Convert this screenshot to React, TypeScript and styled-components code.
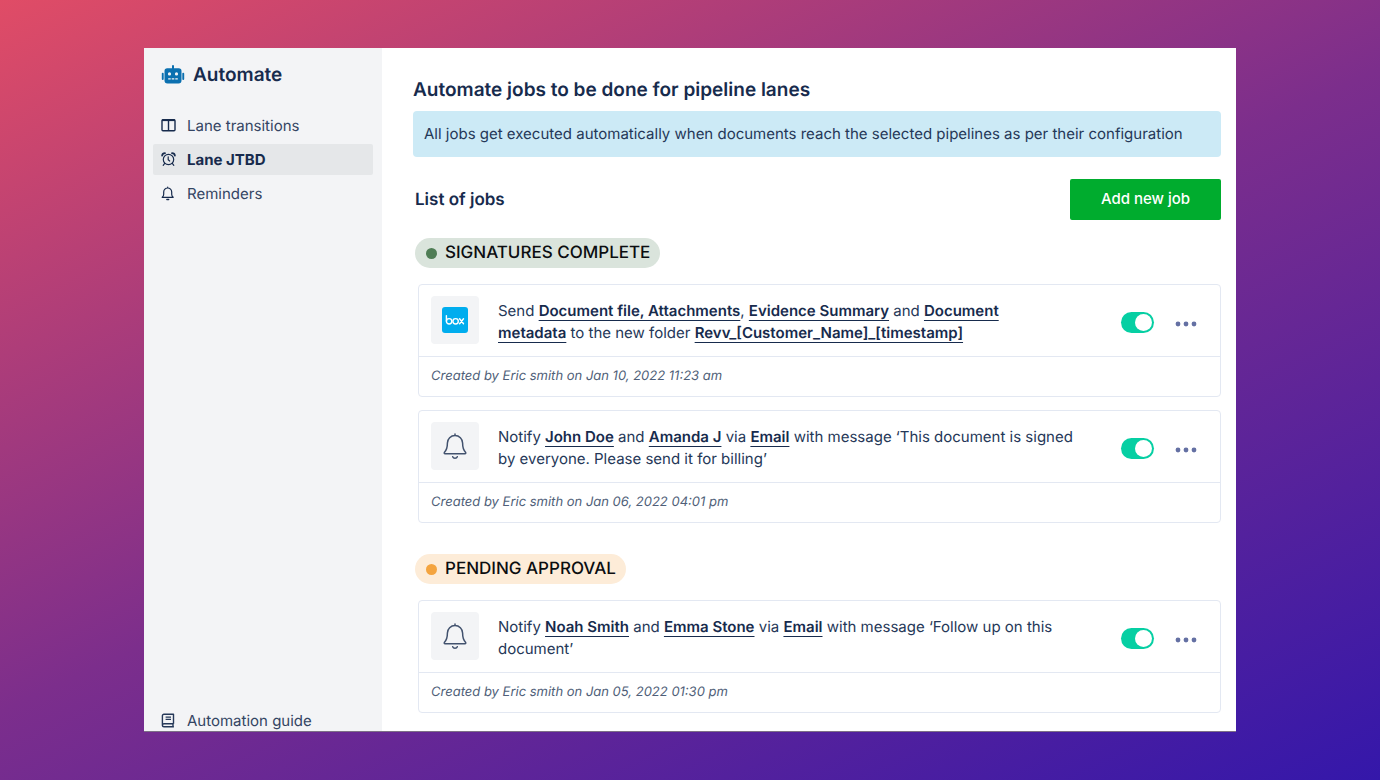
import React from "react";
import styled, { createGlobalStyle } from "styled-components";

const GlobalStyle = createGlobalStyle`
  *, *::before, *::after { box-sizing: border-box; }
  body {
    margin: 0;
    color: #253858;
    font-family: Inter, "Liberation Sans", sans-serif;
    font-size: 15px;
    line-height: 22px;
    text-rendering: geometricPrecision;
  }
`;

const Page = styled.div`
  min-height: 100vh;
  padding: 48px 144px;
  background: linear-gradient(155deg, #e04c66 0%, #7c2e8c 50%, #3417aa 100%);
  display: flex;
`;

const Window = styled.div`
  flex: 1;
  display: flex;
  background: #fff;
  border-bottom: 1px solid #7d6f86;
`;

const Sidebar = styled.aside`
  flex: 0 0 238px;
  display: flex;
  flex-direction: column;
  padding: 14px 9px 0;
  background: #f3f4f6;
`;

const Brand = styled.div`
  display: flex;
  align-items: center;
  gap: 8px;
  padding: 0 8px;
  margin-bottom: 22px;
  color: #172b4d;
  font-size: 19px;
  font-weight: 600;
  line-height: 26px;
`;

const Nav = styled.nav`
  display: flex;
  flex-direction: column;
  gap: 3px;
`;

const NavLink = styled.a<{ $active?: boolean }>`
  display: flex;
  align-items: center;
  gap: 11px;
  height: 31px;
  padding: 0 8px;
  border-radius: 2px;
  background: ${(p) => (p.$active ? "#e5e7e9" : "transparent")};
  color: ${(p) => (p.$active ? "#172b4d" : "#344563")};
  font-weight: ${(p) => (p.$active ? 700 : 400)};
  text-decoration: none;
`;

const Guide = styled.div`
  margin-top: auto;
  height: 26px;
`;

const Main = styled.main`
  flex: 1;
  padding: 28px 15px 18px 31px;
`;

const Title = styled.h1`
  margin: 0 0 7px;
  color: #172b4d;
  font-size: 19px;
  font-weight: 600;
  line-height: 28px;
`;

const Notice = styled.p`
  margin: 0 0 22px;
  padding: 12px 11px;
  border-radius: 4px;
  background: #cceaf6;
`;

const ListHeader = styled.div`
  display: flex;
  align-items: center;
  justify-content: space-between;
  padding-left: 2px;
  margin-bottom: 18px;
`;

const ListTitle = styled.h2`
  margin: 0;
  color: #172b4d;
  font-size: 17px;
  font-weight: 600;
  line-height: 24px;
`;

const AddButton = styled.button`
  width: 151px;
  height: 41px;
  padding: 0 0 2px;
  border: 0;
  border-radius: 2px;
  background: #00ac2e;
  color: #fff;
  font: inherit;
  font-weight: 500;
`;

const Lane = styled.section`
  display: flex;
  flex-direction: column;
  align-items: flex-start;
  padding-left: 2px;
  & + & { margin-top: 31px; }
`;

const LaneTag = styled.h3<{ $bg: string; $dot: string }>`
  display: flex;
  align-items: center;
  gap: 8px;
  margin: 0 0 16px;
  padding: 0 10px 0 11px;
  border-radius: 16px;
  background: ${(p) => p.$bg};
  color: #0b0d10;
  font-size: 17px;
  font-weight: 500;
  line-height: 30px;
  &::before {
    content: "";
    width: 11px;
    height: 11px;
    border-radius: 50%;
    background: ${(p) => p.$dot};
  }
`;

const Jobs = styled.div`
  align-self: stretch;
  display: flex;
  flex-direction: column;
  gap: 13px;
  padding-left: 3px;
`;

const Card = styled.article`
  border: 1px solid #e3e8f2;
  border-radius: 4px;
`;

const CardBody = styled.div`
  display: flex;
  align-items: center;
  height: 72px;
  padding: 3px 23px 0 12px;
  border-bottom: 1px solid #e3e8f2;
`;

const Tile = styled.div`
  flex: 0 0 48px;
  align-self: flex-start;
  height: 48px;
  display: grid;
  place-items: center;
  margin: 8px 19px 0 0;
  border-radius: 4px;
  background: #f3f4f6;
`;

const Description = styled.p`
  flex: 0 1 580px;
  margin: 0 auto 0 0;
`;

const Field = styled.a`
  color: #172b4d;
  font-weight: 600;
  text-decoration: underline;
  text-decoration-thickness: 1px;
  text-underline-offset: 4px;
`;

const Meta = styled.p`
  margin: 0;
  padding: 0 12px;
  color: #505f79;
  font-size: 13px;
  font-style: italic;
  line-height: 39px;
`;

const Switch = styled.input`
  appearance: none;
  width: 33px;
  height: 21px;
  margin: 0 21px 0 0;
  border-radius: 11px;
  background: #06cfa3;
  &::before {
    content: "";
    display: block;
    width: 17px;
    height: 17px;
    margin: 2px;
    border-radius: 50%;
    background: #fff;
  }
  &:checked::before { margin-left: 14px; }
`;

const MoreButton = styled.button`
  display: flex;
  padding: 4px 0 0;
  border: 0;
  background: none;
  color: #6470a3;
`;

const RobotIcon = () => (
  <svg width="24" height="20" viewBox="0 0 24 20" fill="#0b70b0" aria-hidden="true">
    <path
      fillRule="evenodd"
      d="M12 0a1 1 0 0 1 1 1v2.200h4.700a2.800 2.800 0 0 1 2.800 2.800v9.500a3 3 0 0 1-3 3h-11a3 3 0 0 1-3-3V6a2.800 2.800 0 0 1 2.800-2.800H11V1a1 1 0 0 1 1-1zM8.500 7.300a1.600 1.600 0 1 0 0 3.200 1.600 1.600 0 0 0 0-3.200zm7 0a1.600 1.600 0 1 0 0 3.200 1.600 1.600 0 0 0 0-3.200zM7.200 13.200v1.400h2.500v-1.400zm3.500 0v1.400h2.600v-1.400zm3.600 0v1.400h2.500v-1.400z"
    />
    <rect x="0.800" y="7.800" width="1.900" height="7.200" rx="0.900" />
    <rect x="21.300" y="7.800" width="1.900" height="7.200" rx="0.900" />
  </svg>
);

const ColumnsIcon = () => (
  <svg width="15" height="15" viewBox="0 0 15 15" fill="none" stroke="#172b4d" aria-hidden="true">
    <rect x="1" y="1.800" width="13" height="11" rx="1" strokeWidth="1.400" />
    <path d="M1 2.200h13" strokeWidth="1.800" />
    <path d="M7.500 2v11" strokeWidth="1.400" />
  </svg>
);

const AlarmIcon = () => (
  <svg width="15" height="15" viewBox="0 0 15 15" fill="none" stroke="#172b4d" strokeWidth="1.200" strokeLinecap="round" strokeLinejoin="round" aria-hidden="true">
    <circle cx="7.500" cy="7.500" r="5.200" />
    <path d="M7.200 4.800v3l1.500 1.200M3.700 11.400l-1.500 1.900M11.300 11.400l1.500 1.900" />
    <path d="M1.100 3.700C1.300 2.100 2.500 1.200 4 1.200M13.900 3.700C13.700 2.100 12.500 1.200 11 1.200" strokeWidth="1.700" />
  </svg>
);

const SmallBellIcon = () => (
  <svg width="15" height="15" viewBox="0 0 15 15" fill="none" stroke="#172b4d" strokeWidth="1.200" strokeLinecap="round" strokeLinejoin="round" aria-hidden="true">
    <path d="M6.700 1v1M1.200 11.300h11c-.9-.7-1.500-1.700-1.500-3V6a4 4 0 0 0-8 0v2.300c0 1.300-.5 2.300-1.500 3z" />
    <path d="M5.900 13.500h1.700" strokeWidth="1.500" />
  </svg>
);

const BookIcon = () => (
  <svg width="15" height="15" viewBox="0 0 15 15" fill="none" stroke="#253858" strokeWidth="1.400" strokeLinejoin="round" aria-hidden="true">
    <path d="M12.500 10.700V1.200H2.900A1.500 1.500 0 0 0 1.400 2.700v9.600a1.500 1.500 0 0 0 1.500 1.500h10M12.500 10.700H2.900a1.500 1.500 0 0 0 0 3M12 10.700v3M4.600 4.100h5.400M4.600 6.400h5.400" />
  </svg>
);

const BellIcon = () => (
  <svg width="26" height="28" viewBox="0 0 26 28" fill="none" stroke="#42526e" strokeWidth="1.500" strokeLinecap="round" strokeLinejoin="round" aria-hidden="true">
    <path d="M13 2v1.500M13 3.500a7.600 7.600 0 0 0-7.600 7.600c0 4.800-1 7.300-2.900 9.100-.6.700-.3 1.500.6 1.500h19.800c.9 0 1.200-.8.600-1.500-1.900-1.800-2.900-4.300-2.900-9.100A7.600 7.600 0 0 0 13 3.500zM10.700 24.800a2.400 2 0 0 0 4.600 0" />
  </svg>
);

const BoxLogo = () => (
  <svg width="26" height="26" viewBox="0 0 26 26" fill="none" stroke="#fff" strokeWidth="1.400" strokeLinecap="round" role="img" aria-label="box">
    <rect width="26" height="26" rx="3" fill="#00adee" stroke="none" />
    <path d="M4.400 8.800v5.300" />
    <circle cx="7.100" cy="14.300" r="2.700" />
    <circle cx="13.600" cy="14.300" r="2.700" />
    <path d="M17.600 11.800l3.900 5M21.500 11.800l-3.900 5" />
  </svg>
);

const DotsIcon = () => (
  <svg width="22" height="6" viewBox="0 0 22 6" fill="currentColor" aria-hidden="true">
    <circle cx="3" cy="3" r="2.400" />
    <circle cx="11" cy="3" r="2.400" />
    <circle cx="19" cy="3" r="2.400" />
  </svg>
);

const F = ({ children }: { children: React.ReactNode }) => <Field href="#">{children}</Field>;

type JobProps = { icon: React.ReactNode; meta: string; children: React.ReactNode };

const Job = ({ icon, meta, children }: JobProps) => (
  <Card>
    <CardBody>
      <Tile>{icon}</Tile>
      <Description>{children}</Description>
      <Switch type="checkbox" role="switch" defaultChecked aria-label="Job enabled" />
      <MoreButton type="button" aria-label="More actions">
        <DotsIcon />
      </MoreButton>
    </CardBody>
    <Meta>{meta}</Meta>
  </Card>
);

export default function App() {
  return (
    <>
      <GlobalStyle />
      <Page>
        <Window>
          <Sidebar>
            <Brand>
              <RobotIcon />
              Automate
            </Brand>
            <Nav>
              <NavLink href="#"><ColumnsIcon />Lane transitions</NavLink>
              <NavLink href="#" $active aria-current="page"><AlarmIcon />Lane JTBD</NavLink>
              <NavLink href="#"><SmallBellIcon />Reminders</NavLink>
            </Nav>
            <Guide>
              <NavLink href="#"><BookIcon />Automation guide</NavLink>
            </Guide>
          </Sidebar>
          <Main>
            <Title>Automate jobs to be done for pipeline lanes</Title>
            <Notice>
              All jobs get executed automatically when documents reach the selected pipelines as per their configuration
            </Notice>
            <ListHeader>
              <ListTitle>List of jobs</ListTitle>
              <AddButton type="button">Add new job</AddButton>
            </ListHeader>
            <Lane>
              <LaneTag $bg="#dae4dc" $dot="#4f7d55">SIGNATURES COMPLETE</LaneTag>
              <Jobs>
                <Job icon={<BoxLogo />} meta="Created by Eric smith on Jan 10, 2022 11:23 am">
                  Send <F>Document file, Attachments</F>, <F>Evidence Summary</F> and{" "}
                  <F>Document<br />metadata</F> to the new folder <F>Revv_[Customer_Name]_[timestamp]</F>
                </Job>
                <Job icon={<BellIcon />} meta="Created by Eric smith on Jan 06, 2022 04:01 pm">
                  Notify <F>John Doe</F> and <F>Amanda J</F> via <F>Email</F> with message ‘This document is signed by
                  everyone. Please send it for billing’
                </Job>
              </Jobs>
            </Lane>
            <Lane>
              <LaneTag $bg="#fdecd8" $dot="#f4a43f">PENDING APPROVAL</LaneTag>
              <Jobs>
                <Job icon={<BellIcon />} meta="Created by Eric smith on Jan 05, 2022 01:30 pm">
                  Notify <F>Noah Smith</F> and <F>Emma Stone</F> via <F>Email</F> with message ‘Follow up on this
                  document’
                </Job>
              </Jobs>
            </Lane>
          </Main>
        </Window>
      </Page>
    </>
  );
}
